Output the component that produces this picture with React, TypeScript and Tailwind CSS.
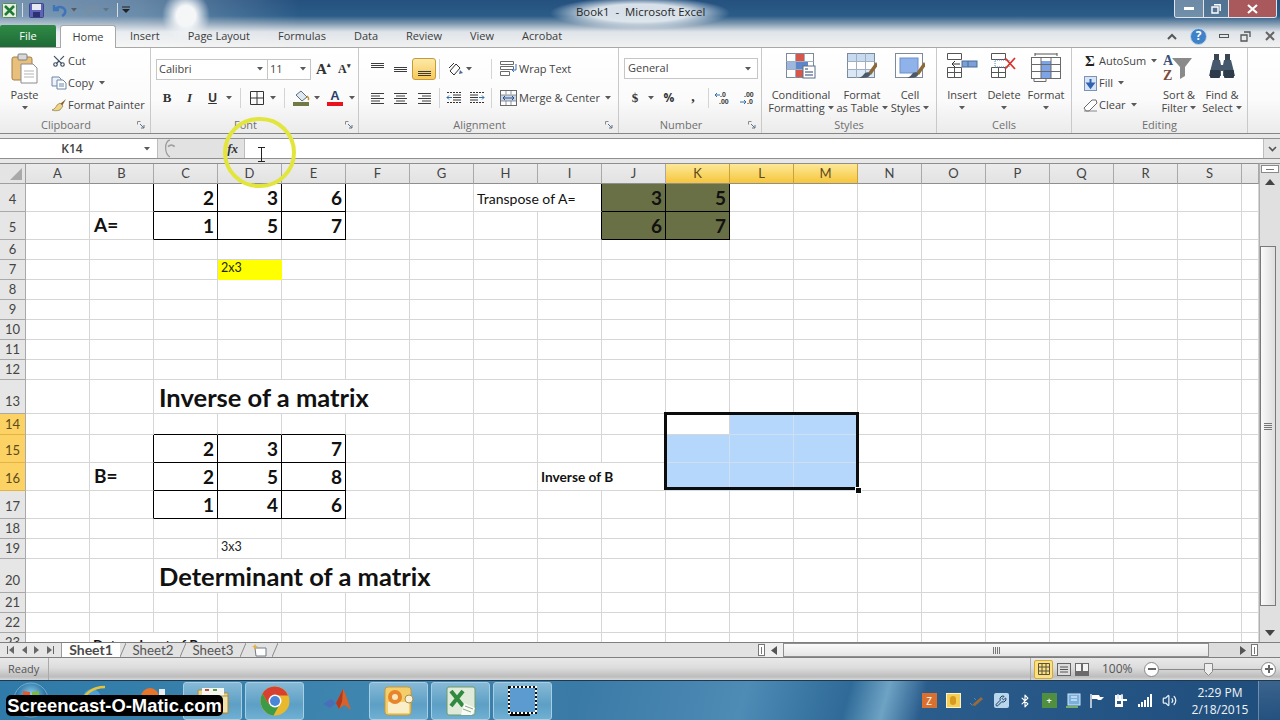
import React from "react";
import { Bluetooth, Scissors, Volume2, Wrench } from "lucide-react";

type CellData = { t?: string; cls?: string; span?: number };

const COLS = ["A", "B", "C", "D", "E", "F", "G", "H", "I", "J", "K", "L", "M", "N", "O", "P", "Q", "R", "S", ""];
const ROWS = [4, 5, 6, 7, 8, 9, 10, 11, 12, 13, 14, 15, 16, 17, 18, 19, 20, 21, 22, 23];

const num = "justify-end pr-[3px] text-[19px] font-bold leading-[20px] pb-[3px] text-[#111]";
const black = "border-[#000]";
// black edge of a table, drawn by the neighbouring cell
const edgeR = "border-r-[#000] border-b-[#d6d6d6]";
const edgeB = "border-b-[#000] border-r-[#d6d6d6]";
const olive = "bg-[#6a7046] border-[#000]";
const sel = "bg-[#b6d7fc] border-[#cfdff2]";
const title = "pl-[5px] text-[25.500px] font-bold leading-[30px] pb-[1px] text-[#111]";
const label = "pl-[4px] text-[19px] font-bold leading-[20px] pb-[4px] text-[#111]";

// only the cells that hold something or look different from a blank one
const sheet: Record<number, Record<string, CellData>> = {
  4: {
    B: { cls: edgeR },
    C: { t: "2", cls: `${num} ${black}` },
    D: { t: "3", cls: `${num} ${black}` },
    E: { t: "6", cls: `${num} ${black}` },
    H: { t: "Transpose of A=", span: 2, cls: `pl-[3px] text-[14px] pb-[2px] text-[#111] ${edgeR}` },
    J: { t: "3", cls: `${num} ${olive}` },
    K: { t: "5", cls: `${num} ${olive}` },
  },
  5: {
    B: { t: "A=", cls: `${label} ${edgeR}` },
    C: { t: "1", cls: `${num} ${black}` },
    D: { t: "5", cls: `${num} ${black}` },
    E: { t: "7", cls: `${num} ${black}` },
    I: { cls: edgeR },
    J: { t: "6", cls: `${num} ${olive}` },
    K: { t: "7", cls: `${num} ${olive}` },
  },
  7: { D: { t: "2x3", cls: "pl-[3px] text-[12.500px] pb-[1px] bg-[#ffff00] border-[#ffff00] text-[#222]" } },
  13: { C: { t: "Inverse of a matrix", span: 4, cls: title } },
  14: { C: { cls: edgeB }, D: { cls: edgeB }, E: { cls: edgeB }, L: { cls: sel }, M: { cls: sel } },
  15: {
    B: { cls: edgeR },
    C: { t: "2", cls: `${num} ${black}` },
    D: { t: "3", cls: `${num} ${black}` },
    E: { t: "7", cls: `${num} ${black}` },
    K: { cls: sel },
    L: { cls: sel },
    M: { cls: sel },
  },
  16: {
    B: { t: "B=", cls: `${label} ${edgeR}` },
    C: { t: "2", cls: `${num} ${black}` },
    D: { t: "5", cls: `${num} ${black}` },
    E: { t: "8", cls: `${num} ${black}` },
    I: { t: "Inverse of B", span: 2, cls: "pl-[3px] text-[13.700px] font-bold pb-[2px] text-[#111]" },
    K: { cls: sel },
    L: { cls: sel },
    M: { cls: sel },
  },
  17: {
    B: { cls: edgeR },
    C: { t: "1", cls: `${num} ${black}` },
    D: { t: "4", cls: `${num} ${black}` },
    E: { t: "6", cls: `${num} ${black}` },
  },
  19: { D: { t: "3x3", cls: "pl-[3px] text-[12.500px] pb-[1px] text-[#222]" } },
  20: { C: { t: "Determinant of a matrix", span: 5, cls: title } },
  23: { B: { t: "Determinant of B", span: 2, cls: "pl-[3px] text-[13.700px] font-bold items-start pt-[2px] text-[#111]" } },
};

const spanClass: Record<number, string> = { 2: "col-span-2", 4: "col-span-4", 5: "col-span-5" };
const tallRows = [4, 5, 13, 15, 16, 17, 20];

function Caret({ cls = "" }: { cls?: string }) {
  return (
    <svg width="6" height="4" viewBox="0 0 6 4" className={`inline-block shrink-0 ${cls}`}>
      <path d="M0 0h6L3 3.5z" fill="#5a5a5a" />
    </svg>
  );
}

function Launcher() {
  return (
    <svg width="8" height="8" viewBox="0 0 8 8">
      <path d="M.5 .5h3M.5 .5v3" stroke="#8a8a8a" fill="none" />
      <path d="M3 3l4 4M7 4v3H4" stroke="#5f7488" fill="none" />
    </svg>
  );
}

function Group({ w, label, launcher, children }: { w: string; label: string; launcher?: boolean; children: React.ReactNode }) {
  return (
    <div className={`${w} flex flex-col border-r border-[#c9c9c9] shrink-0`}>
      <div className="h-[70px] flex">{children}</div>
      <div className="h-[16px] flex items-center text-[11px] text-[#6f6f6f]">
        <div className="flex-1 text-center leading-[14px]">{label}</div>
        {launcher && (
          <div className="w-[18px] flex items-center justify-start pl-[5px]">
            <Launcher />
          </div>
        )}
      </div>
    </div>
  );
}

function BigBtn({ w, icon, l1, l2, caret = true }: { w: string; icon: React.ReactNode; l1: string; l2?: string; caret?: boolean }) {
  return (
    <div className={`${w} flex flex-col items-center pt-[5px] text-[11px] leading-[13px] text-[#444] shrink-0 whitespace-nowrap`}>
      <div className="h-[35px] flex items-start justify-center">{icon}</div>
      <div>{l1}</div>
      <div className="flex items-center gap-[3px] h-[13px]">
        {l2 && <span>{l2}</span>}
        {caret && <Caret />}
      </div>
    </div>
  );
}

function SmallBtn({ icon, text, caret, iconW = "w-[19px]" }: { icon: React.ReactNode; text: string; caret?: boolean; iconW?: string }) {
  return (
    <div className="h-[22px] flex items-center text-[11px] text-[#444] whitespace-nowrap">
      <div className={`${iconW} flex items-center justify-center shrink-0`}>{icon}</div>
      <span>{text}</span>
      {caret && <Caret cls="ml-[5px]" />}
    </div>
  );
}

function Slot({ w, children }: { w: string; children?: React.ReactNode }) {
  return <div className={`${w} h-[22px] flex items-center justify-center shrink-0`}>{children}</div>;
}

function VSep({ w }: { w: string }) {
  return (
    <Slot w={w}>
      <div className="w-px h-[20px] bg-[#d4d4d4]" />
    </Slot>
  );
}

function AlignIcon({ kind }: { kind: "top" | "mid" | "bot" | "l" | "c" | "r" }) {
  const c = "#3c3c3c";
  if (kind === "top" || kind === "mid" || kind === "bot") {
    const y = kind === "top" ? 1 : kind === "mid" ? 5 : 9;
    return (
      <svg width="15" height="15" viewBox="0 0 15 15">
        {[0, 2, 4].map((d) => (
          <path key={d} d={`M1 ${y + d + 0.5}h13`} stroke={c} />
        ))}
      </svg>
    );
  }
  const xs = kind === "l" ? [1, 1, 1, 1, 1] : kind === "c" ? [1, 3, 1, 3, 1] : [1, 5, 1, 5, 1];
  const ws = [13, 9, 13, 9, 13];
  return (
    <svg width="15" height="13" viewBox="0 0 15 13">
      {xs.map((x, i) => (
        <path key={i} d={`M${x} ${i * 2.5 + 1.5}h${ws[i]}`} stroke={c} />
      ))}
    </svg>
  );
}

function IndentIcon({ flip }: { flip?: boolean }) {
  return (
    <svg width="16" height="14" viewBox="0 0 16 14" className={flip ? "-scale-x-100" : ""}>
      {[1, 3.5, 6, 8.5, 11].map((y, i) => (
        <path key={y} d={`M${i % 4 === 0 ? 1 : 7} ${y + 0.5}h${i % 4 === 0 ? 14 : 8}`} stroke="#333" strokeDasharray={i === 0 || i === 4 ? "2 1" : undefined} />
      ))}
      <path d="M6 6.500H1M3 4.500L1 6.500l2 2" stroke="#2f6fb0" fill="none" />
    </svg>
  );
}

function Grid3({ children, w = 30, h = 26 }: { children?: React.ReactNode; w?: number; h?: number }) {
  return (
    <svg width={w} height={h} viewBox="0 0 30 26">
      <rect x=".5" y=".5" width="27" height="24" fill="#fff" stroke="#7c8a99" />
      <path d="M9.500 .5v24M18.500 .5v24M.5 8.500h27M.5 16.500h27" stroke="#9fb0c2" />
      {children}
    </svg>
  );
}

function Brush() {
  return (
    <g>
      <path d="M29 9l-8 11 3 2 7-10z" fill="#8a6a3a" />
      <path d="M18 20c3-2 6 0 5 2-1 3-7 3-11 3 3-1 4-3 6-5z" fill="#4c5a68" />
    </g>
  );
}

function Orb() {
  return (
    <svg width="36" height="36" viewBox="0 0 36 36">
      <defs>
        <radialGradient id="orb" cx=".5" cy=".35" r=".7">
          <stop offset="0" stopColor="#8fd0ef" />
          <stop offset=".6" stopColor="#2a75a6" />
          <stop offset="1" stopColor="#0d3f66" />
        </radialGradient>
      </defs>
      <circle cx="18" cy="18" r="17" fill="url(#orb)" stroke="#a9c6d8" strokeOpacity=".6" />
      <path d="M10 9l7 1v7l-7-1z" fill="#e8572c" />
      <path d="M19 10l7-1v7l-7 1z" fill="#7bbb3d" />
      <path d="M10 18l7 1v6l-7-1z" fill="#2f9ae0" />
      <path d="M19 19l7-1v6l-7 1z" fill="#f4c12f" />
    </svg>
  );
}

function Chrome() {
  return (
    <svg width="30" height="30" viewBox="0 0 30 30">
      <circle cx="15" cy="15" r="14.500" fill="#e8b92c" />
      <path d="M15 .5A14.500 14.500 0 0 0 2.400 7.800L8.500 18 15 9.500h13A14.500 14.500 0 0 0 15 .5z" fill="#d8402f" />
      <path d="M2.400 7.800A14.500 14.500 0 0 0 13.500 29.400L19 19.500 8.500 18z" fill="#3d9a45" />
      <circle cx="15" cy="15" r="6.500" fill="#fff" />
      <circle cx="15" cy="15" r="5" fill="#4a86d8" />
    </svg>
  );
}

function TaskBtn({ lit = true, children }: { lit?: boolean; children: React.ReactNode }) {
  return (
    <div
      className={`w-[59px] h-[38px] mt-[1px] flex items-center justify-center rounded-[3px] shrink-0 ${
        lit ? "border border-[#a7cfe3] bg-[linear-gradient(180deg,#86b9d6_0%,#5d9fc5_60%,#6fb0d3_100%)]" : ""
      }`}
    >
      {children}
    </div>
  );
}

function Tray({ children }: { children?: React.ReactNode }) {
  return <div className="w-[24px] h-[40px] flex items-center justify-center shrink-0">{children}</div>;
}

export default function App() {
  return (
    <div className="relative w-[1280px] h-[720px] overflow-hidden flex flex-col bg-white font-['Open_Sans','Noto_Sans',sans-serif]">
      {/* title bar + tabs */}
      <div className="h-[47px] shrink-0 flex flex-col bg-[radial-gradient(ellipse_24px_26px_at_186px_16px,#f4f6f8_40%,transparent_100%),radial-gradient(ellipse_90px_16px_at_640px_13px,rgba(235,240,244,.9)_55%,transparent_100%),linear-gradient(90deg,rgba(255,255,255,.38)_0px,rgba(255,255,255,.3)_140px,transparent_300px),linear-gradient(180deg,#25517f_0%,#2b5c88_34%,#7e98b0_50%,#dfe4e9_68%,#f1f1f1_100%)]">
        <div className="h-[25px] flex items-start">
          {/* quick access */}
          <div className="flex items-center h-[20px] pl-[2px]">
            <svg width="15" height="15" viewBox="0 0 15 15">
              <rect x=".5" y=".5" width="14" height="14" rx="1" fill="#e4efe0" stroke="#5d8a5a" />
              <path d="M3 3l9 9M12 3l-9 9" stroke="#1f7a35" strokeWidth="2.600" />
            </svg>
            <div className="w-px h-[14px] bg-[#d8dde2] ml-[5px] mr-[6px]" />
            <svg width="15" height="15" viewBox="0 0 15 15">
              <rect x=".5" y=".5" width="14" height="14" rx="1" fill="#5c63b8" stroke="#3d4488" />
              <rect x="3" y="1" width="9" height="6" fill="#e6e9f2" />
              <rect x="4" y="9" width="7" height="5" fill="#2c3270" />
            </svg>
            <svg width="15" height="14" viewBox="0 0 15 14" className="ml-[8px]">
              <path d="M2 2v5h5M2.500 7C5 3 11 3 13 7c1 3-1 5-3 6" stroke="#3f74b8" strokeWidth="2.400" fill="none" />
            </svg>
            <Caret cls="ml-[4px]" />
            <svg width="14" height="14" viewBox="0 0 15 14" className="ml-[8px] -scale-x-100 opacity-50">
              <path d="M2 2v5h5M2.500 7C5 3 11 3 13 7c1 3-1 5-3 6" stroke="#7f8c96" strokeWidth="2.400" fill="none" />
            </svg>
            <Caret cls="ml-[4px] opacity-50" />
            <div className="w-px h-[14px] bg-[#d8dde2] ml-[8px] mr-[4px]" />
            <svg width="8" height="8" viewBox="0 0 8 8">
              <path d="M0 1h8" stroke="#222" />
              <path d="M0 3h8L4 7z" fill="#222" />
            </svg>
          </div>
          <div className="ml-[446px] h-[24px] flex items-center text-[11.400px] text-[#262626] whitespace-nowrap">Book1&nbsp; -&nbsp; Microsoft Excel</div>
          {/* window buttons */}
          <div className="ml-auto mr-[3px] flex h-[18px] border border-t-0 border-[#dfe5ea] rounded-b-[3px] overflow-hidden">
            <div className="w-[29px] flex items-center justify-center bg-[#9fb0bf]/60 border-r border-[#dfe5ea]">
              <div className="w-[10px] h-[3px] bg-white" />
            </div>
            <div className="w-[25px] flex items-center justify-center bg-[#7d93a6]/50 border-r border-[#dfe5ea]">
              <svg width="10" height="10" viewBox="0 0 10 10">
                <path d="M3 .8h6.200V7M1 3h6v6H1z" stroke="#fff" strokeWidth="1.400" fill="none" />
              </svg>
            </div>
            <div className="w-[47px] flex items-center justify-center bg-[#a9585c] text-white">
              <svg width="11" height="10" viewBox="0 0 11 10">
                <path d="M1 1l9 8M10 1l-9 8" stroke="#fff" strokeWidth="2.200" />
              </svg>
            </div>
          </div>
        </div>
        <div className="h-[22px] flex items-end text-[11px] text-[#3c3c3c]">
          <div className="w-[56px] h-[22px] bg-[linear-gradient(180deg,#2f8a45,#1f6b37)] rounded-t-[2px] flex items-center justify-center text-white">File</div>
          <div className="w-[56px] h-[23px] -mb-px ml-[4px] z-10 bg-white border border-b-0 border-[#a8a8a8] rounded-t-[3px] flex items-center justify-center">Home</div>
          <div className="ml-[14px] flex gap-[28px] h-[22px] items-center whitespace-nowrap">
            <span>Insert</span>
            <span>Page Layout</span>
            <span>Formulas</span>
            <span>Data</span>
            <span>Review</span>
            <span>View</span>
            <span>Acrobat</span>
          </div>
          <div className="ml-auto h-[22px] flex items-center text-[#555]">
            <svg width="10" height="8" viewBox="0 0 10 8" className="mr-[13px]">
              <path d="M1 7l4-4 4 4" stroke="#555" strokeWidth="2" fill="none" />
            </svg>
            <div className="w-[17px] h-[17px] rounded-full bg-[#3f82c8] border border-[#bcd6ee] text-white text-[12px] font-bold flex items-center justify-center leading-none">?</div>
            <div className="w-[10px] h-[4px] border border-[#555] ml-[12px]" />
            <svg width="11" height="11" viewBox="0 0 11 11" className="ml-[11px]">
              <path d="M4 1h6v5M1 4h6v6H1z" stroke="#555" strokeWidth="1.300" fill="none" />
            </svg>
            <svg width="10" height="10" viewBox="0 0 10 10" className="ml-[14px] mr-[5px]">
              <path d="M1 1l8 8M9 1l-8 8" stroke="#666" strokeWidth="2" />
            </svg>
          </div>
        </div>
      </div>

      {/* ribbon */}
      <div className="h-[87px] shrink-0 flex border-t border-b border-t-[#a8a8a8] border-b-[#858585] bg-[linear-gradient(180deg,#ffffff_0%,#fbfbfb_60%,#ebebeb_100%)]">
        <Group w="w-[151px]" label="Clipboard" launcher>
          <BigBtn
            w="w-[49px]"
            l1="Paste"
            icon={
              <svg width="27" height="31" viewBox="0 0 27 31">
                <rect x="1" y="4" width="20" height="23" rx="2" fill="#e8bf7c" stroke="#a27f45" />
                <rect x="7" y="1" width="9" height="6" rx="1" fill="#d8d8d8" stroke="#7f7f7f" />
                <path d="M10 11h12l4 4v15H10z" fill="#fff" stroke="#8c8c8c" />
                <path d="M13 18h10M13 21h10M13 24h10" stroke="#b5b5b5" />
              </svg>
            }
          />
          <div className="pt-[2px] flex flex-col">
            <SmallBtn icon={<Scissors size={14} color="#3d4f66" className="-rotate-90" />} text="Cut" />
            <SmallBtn
              icon={
                <svg width="16" height="14" viewBox="0 0 16 14">
                  <path d="M1 1h7l2 2v7H1z" fill="#eef3fa" stroke="#6c86a6" />
                  <path d="M6 4h6l3 3v6H6z" fill="#fff" stroke="#6c86a6" />
                  <path d="M8 8h5M8 10h5" stroke="#6c86a6" />
                </svg>
              }
              text="Copy"
              caret
            />
            <SmallBtn
              icon={
                <svg width="16" height="14" viewBox="0 0 16 14">
                  <path d="M15 1L9 6l2 2z" fill="#8a5f2d" />
                  <path d="M9 5l3 3-3 4c-3 1-6 1-8 0 3-1 4-3 5-5z" fill="#efd58a" stroke="#8d7a40" strokeWidth=".7" />
                </svg>
              }
              text="Format Painter"
            />
          </div>
        </Group>

        <Group w="w-[208px]" label="Font" launcher>
          <div className="flex flex-col pt-[10px] gap-[7px] pl-[5px]">
            <div className="flex h-[22px] items-center">
              <div className="w-[112px] h-[21px] border border-[#c6c6c6] bg-white flex items-center justify-between pl-[2px] pr-[4px] text-[11px] text-[#444]">
                Calibri <Caret />
              </div>
              <div className="w-[43px] h-[21px] border border-l-0 border-[#c6c6c6] bg-white flex items-center justify-between pl-[2px] pr-[4px] text-[11px] text-[#444]">
                11 <Caret />
              </div>
              <div className="ml-[5px] w-[15px] flex items-start font-['Liberation_Serif',serif] font-bold text-[15px] leading-none text-[#333]">
                A<span className="text-[7px]">▴</span>
              </div>
              <div className="ml-[7px] w-[15px] flex items-start font-['Liberation_Serif',serif] font-bold text-[12px] leading-none text-[#333]">
                A<span className="text-[7px]">▾</span>
              </div>
            </div>
            <div className="flex h-[22px] items-center text-[#333]">
              <Slot w="w-[22px]">
                <span className="font-['Liberation_Serif',serif] font-bold text-[13px]">B</span>
              </Slot>
              <Slot w="w-[23px]">
                <span className="font-['Liberation_Serif',serif] italic font-bold text-[13px]">I</span>
              </Slot>
              <Slot w="w-[23px]">
                <span className="font-['Liberation_Sans',sans-serif] underline font-bold text-[12px]">U</span>
              </Slot>
              <Slot w="w-[10px]">
                <Caret />
              </Slot>
              <VSep w="w-[12px]" />
              <Slot w="w-[22px]">
                <svg width="14" height="14" viewBox="0 0 14 14">
                  <path d="M.5 .5h13v13H.5zM7 .5v13M.5 7h13" stroke="#333" fill="none" />
                </svg>
              </Slot>
              <Slot w="w-[10px]">
                <Caret />
              </Slot>
              <VSep w="w-[12px]" />
              <Slot w="w-[22px]">
                <svg width="17" height="16" viewBox="0 0 17 16">
                  <path d="M8 1l6 6-5 4-6-6z" fill="#dfe7ef" stroke="#5d6f82" />
                  <path d="M14 6c2 2 2 3 1 4" stroke="#c98f1f" strokeWidth="1.500" fill="none" />
                  <rect x="0" y="12" width="16" height="4" fill="#6f7a45" />
                </svg>
              </Slot>
              <Slot w="w-[10px]">
                <Caret />
              </Slot>
              <Slot w="w-[26px]">
                <div className="flex flex-col items-center leading-none">
                  <span className="font-['Liberation_Sans',sans-serif] font-bold text-[13px] text-[#2a3f6b] leading-[12px]">A</span>
                  <div className="w-[16px] h-[4px] bg-[#e8131c]" />
                </div>
              </Slot>
              <Slot w="w-[8px]">
                <Caret />
              </Slot>
            </div>
          </div>
        </Group>

        <Group w="w-[260px]" label="Alignment" launcher>
          <div className="flex flex-col pt-[10px] gap-[7px] pl-[7px]">
            <div className="flex h-[22px] items-center">
              <Slot w="w-[23px]"><AlignIcon kind="top" /></Slot>
              <Slot w="w-[23px]"><AlignIcon kind="mid" /></Slot>
              <div className="w-[24px] h-[22px] flex items-center justify-center rounded-[3px] border border-[#c49a3c] bg-[linear-gradient(180deg,#fde9a8,#f8c95a)] shrink-0">
                <AlignIcon kind="bot" />
              </div>
              <VSep w="w-[6px]" />
              <Slot w="w-[36px]">
                <svg width="16" height="14" viewBox="0 0 16 14">
                  <path d="M2 9l6-7 4 4-6 7zM1 6l5-5" stroke="#333" fill="none" />
                  <path d="M12 8l3 3-4 1z" fill="#4a6a9a" />
                </svg>
                <Caret cls="ml-[2px]" />
              </Slot>
              <Slot w="w-[10px]" />
              <VSep w="w-[6px]" />
              <SmallBtn
                iconW="w-[25px] pl-[4px]"
                icon={
                  <svg width="18" height="16" viewBox="0 0 18 16">
                    <path d="M.5 .5h13v3H.5zM.5 5.500h13v3H.5zM.5 10.500h9v4h-9z" fill="#fff" stroke="#6a6a6a" />
                    <path d="M16 3v6h-4M14 7l-2 2 2 2" stroke="#3f6db0" fill="none" />
                  </svg>
                }
                text="Wrap Text"
              />
            </div>
            <div className="flex h-[22px] items-center">
              <Slot w="w-[23px]"><AlignIcon kind="l" /></Slot>
              <Slot w="w-[23px]"><AlignIcon kind="c" /></Slot>
              <Slot w="w-[24px]"><AlignIcon kind="r" /></Slot>
              <VSep w="w-[6px]" />
              <Slot w="w-[23px]"><IndentIcon /></Slot>
              <Slot w="w-[23px]"><IndentIcon flip /></Slot>
              <VSep w="w-[6px]" />
              <SmallBtn
                iconW="w-[25px] pl-[4px]"
                icon={
                  <svg width="18" height="16" viewBox="0 0 18 16">
                    <rect x=".5" y=".5" width="16" height="15" fill="#fff" stroke="#6a6a6a" />
                    <rect x="1" y="5" width="15" height="6" fill="#c7d6ea" />
                    <path d="M3 8h11M5 6l-2 2 2 2M12 6l2 2-2 2" stroke="#2c4f85" fill="none" />
                    <path d="M.5 5h16M.5 11h16M6 .5v4M11 .5v4M6 11v4M11 11v4" stroke="#6a6a6a" strokeWidth=".7" />
                  </svg>
                }
                text="Merge & Center"
                caret
              />
            </div>
          </div>
        </Group>

        <Group w="w-[143px]" label="Number" launcher>
          <div className="flex flex-col pt-[10px] gap-[7px] pl-[5px]">
            <div className="w-[134px] h-[21px] mb-[1px] border border-[#c6c6c6] bg-white flex items-center justify-between pl-[3px] pr-[6px] text-[11px] text-[#444]">
              General <Caret />
            </div>
            <div className="flex h-[22px] items-center text-[#333]">
              <Slot w="w-[22px]"><span className="font-bold text-[13px] font-['Liberation_Serif',serif]">$</span></Slot>
              <Slot w="w-[10px]"><Caret /></Slot>
              <Slot w="w-[2px]" />
              <Slot w="w-[22px]"><span className="font-bold text-[12px]">%</span></Slot>
              <Slot w="w-[2px]" />
              <Slot w="w-[22px]"><span className="font-bold text-[14px] font-['Liberation_Serif',serif] -mt-[4px]">,</span></Slot>
              <VSep w="w-[8px]" />
              <Slot w="w-[24px]">
                <svg width="18" height="14" viewBox="0 0 18 14">
                  <text x="5" y="6" fontSize="7" fontWeight="700" fill="#333" fontFamily="Liberation Sans">.0</text>
                  <text x="4" y="13" fontSize="7" fontWeight="700" fill="#333" fontFamily="Liberation Sans">.00</text>
                  <path d="M5 4H0M2 2L0 4l2 2" stroke="#2f6fb0" fill="none" />
                </svg>
              </Slot>
              <Slot w="w-[24px]">
                <svg width="18" height="14" viewBox="0 0 18 14">
                  <text x="5" y="6" fontSize="7" fontWeight="700" fill="#333" fontFamily="Liberation Sans">.00</text>
                  <text x="8" y="13" fontSize="7" fontWeight="700" fill="#333" fontFamily="Liberation Sans">.0</text>
                  <path d="M1 11h6M5 9l2 2-2 2" stroke="#2f6fb0" fill="none" />
                </svg>
              </Slot>
            </div>
          </div>
        </Group>

        <Group w="w-[175px]" label="Styles">
          <div className="w-[7px]" />
          <BigBtn
            w="w-[64px]"
            l1="Conditional"
            l2="Formatting"
            icon={
              <Grid3>
                <rect x="10" y="1" width="8" height="7" fill="#d8564a" />
                <rect x="1" y="9" width="8" height="7" fill="#9db7e0" />
                <rect x="10" y="9" width="12" height="7" fill="#5f86c9" />
                <rect x="10" y="17" width="8" height="7" fill="#d8564a" />
                <rect x="17" y="13" width="12" height="12" fill="#fff" stroke="#5a6f85" />
                <path d="M19 16h3M19 19h8M19 22h8" stroke="#2a3f6b" />
              </Grid3>
            }
          />
          <BigBtn
            w="w-[58px]"
            l1="Format"
            l2="as Table"
            icon={
              <Grid3>
                <rect x="1" y="1" width="26" height="7" fill="#c7daf0" />
                <rect x="1" y="17" width="26" height="7" fill="#dbe7f5" />
                <path d="M9.500 .5v24M18.500 .5v24" stroke="#9fb0c2" />
                <Brush />
              </Grid3>
            }
          />
          <BigBtn
            w="w-[38px]"
            l1="Cell"
            l2="Styles"
            icon={
              <svg width="30" height="26" viewBox="0 0 30 26">
                <rect x=".5" y=".5" width="27" height="24" fill="#fff" stroke="#7c8a99" />
                <rect x="5" y="5" width="18" height="15" fill="#8fb2ea" stroke="#6c8fc9" />
                <Brush />
              </svg>
            }
          />
        </Group>

        <Group w="w-[135px]" label="Cells">
          <div className="w-[4px]" />
          <BigBtn
            w="w-[42px]"
            l1="Insert"
            icon={
              <svg width="32" height="26" viewBox="0 0 32 26">
                <path d="M1.500 .5h14v6h-14zM1.500 14.500h14v10h-14zM8.500 14.500v10M1.500 19.500h14" fill="#fff" stroke="#555" />
                <rect x="16" y="8" width="15" height="6" fill="#7ba0d8" stroke="#4a6a9a" />
                <path d="M22 8v6" stroke="#4a6a9a" />
                <path d="M14 11H6M9 8l-3 3 3 3" stroke="#333" fill="none" />
              </svg>
            }
          />
          <BigBtn
            w="w-[42px]"
            l1="Delete"
            icon={
              <svg width="28" height="26" viewBox="0 0 28 26">
                <path d="M1.500 .5h14v6h-14zM1.500 14.500h14v10h-14zM8.500 14.500v10M1.500 19.500h14" fill="#fff" stroke="#555" />
                <rect x="5" y="7" width="14" height="7" fill="#fff" stroke="#5a7fb8" strokeDasharray="1 1" />
                <path d="M15 5l10 11M25 5L15 16" stroke="#d8342a" strokeWidth="1.800" />
              </svg>
            }
          />
          <BigBtn
            w="w-[42px]"
            l1="Format"
            icon={
              <svg width="30" height="30" viewBox="0 0 30 30">
                <path d="M4 1h22M4 0v3M26 0v3" stroke="#555" />
                <rect x=".5" y="4.500" width="29" height="21" fill="#fff" stroke="#6a6a6a" />
                <rect x="10" y="8" width="10" height="17" fill="#7ea4e8" />
                <path d="M10 4.500v21M20 4.500v21M.5 11.500h29M.5 18.500h29" stroke="#6a6a6a" />
                <path d="M3 25.500v3h12v-3" stroke="#6a6a6a" fill="none" />
              </svg>
            }
          />
        </Group>

        <Group w="w-[176px]" label="Editing">
          <div className="w-[9px]" />
          <div className="w-[76px] pt-[2px] flex flex-col">
            <SmallBtn iconW="w-[18px]" icon={<span className="font-['Liberation_Serif',serif] font-bold text-[15px] text-[#222] leading-none">Σ</span>} text="AutoSum" caret />
            <SmallBtn
              iconW="w-[18px]"
              icon={
                <svg width="13" height="15" viewBox="0 0 13 15">
                  <rect x=".5" y=".5" width="12" height="14" fill="#d6e4f6" stroke="#7c93b3" />
                  <path d="M6.500 3v7M3.500 7.500l3 4 3-4z" stroke="#2f62b0" fill="#2f62b0" strokeWidth="2" />
                </svg>
              }
              text="Fill"
              caret
            />
            <SmallBtn
              iconW="w-[18px]"
              icon={
                <svg width="15" height="13" viewBox="0 0 15 13">
                  <path d="M1 9l8-8h4l1 3-8 8H3z" fill="#fff" stroke="#6a6a6a" />
                  <path d="M1 12h13" stroke="#888" />
                </svg>
              }
              text="Clear"
              caret
            />
          </div>
          <BigBtn
            w="w-[44px]"
            l1="Sort &"
            l2="Filter"
            icon={
              <div className="w-[32px] h-[30px] flex">
                <div className="flex flex-col font-['Liberation_Serif',serif] font-bold text-[14px] leading-[15px] text-[#38507a]">
                  <span>A</span>
                  <span className="text-[#7a4a3a]">Z</span>
                </div>
                <svg width="20" height="26" viewBox="0 0 20 26" className="mt-[4px] -ml-[1px]">
                  <path d="M0 1h20l-7 9v9l-5 3V10z" fill="#8a8a8a" />
                </svg>
              </div>
            }
          />
          <BigBtn
            w="w-[42px]"
            l1="Find &"
            l2="Select"
            icon={
              <svg width="28" height="27" viewBox="0 0 28 27">
                <rect x="6" y="1" width="5" height="6" fill="#3a4654" />
                <rect x="17" y="1" width="5" height="6" fill="#3a4654" />
                <path d="M5 7h7l1 5h2l1-5h7l4 16H15v-5h-2v5H1z" fill="#46586c" />
                <rect x="2" y="17" width="10" height="8" rx="1" fill="#2e3b4a" />
                <rect x="16" y="17" width="10" height="8" rx="1" fill="#2e3b4a" />
              </svg>
            }
          />
        </Group>
      </div>

      {/* formula bar */}
      <div className="h-[29px] shrink-0 bg-[#e8e8e8] pt-[4px] flex flex-col">
        <div className="h-[21px] flex items-stretch border-t border-b border-[#8f8f8f] bg-[#e2e2e2]">
          <div className="w-[157px] bg-white flex items-center text-[12px] text-[#333]">
            <span className="w-[144px] text-center font-semibold text-[#444]">K14</span>
            <Caret />
          </div>
          <div className="w-[88px] flex items-center border-l border-r border-[#bdbdbd]">
            <svg width="16" height="19" viewBox="0 0 16 20" className="ml-[2px]">
              <path d="M10 1C4 3 4 15 10 19" stroke="#9a9a9a" strokeWidth="1.300" fill="none" />
              <path d="M8 8c2-2 5-2 7 0" stroke="#a0a0a0" strokeWidth="2" fill="none" />
            </svg>
            <span className="ml-auto mr-[6px] font-['Liberation_Serif',serif] italic font-bold text-[13px] text-[#333]">fx</span>
          </div>
          <div className="flex-1 bg-white" />
          <div className="w-[17px] flex items-center justify-center border-l border-[#bdbdbd] bg-[#e4e4e4]">
            <svg width="9" height="6" viewBox="0 0 9 6">
              <path d="M1 1l3.500 3.500L8 1" stroke="#555" strokeWidth="1.600" fill="none" />
            </svg>
          </div>
        </div>
      </div>

      {/* sheet + vertical scrollbar */}
      <div className="h-[479px] shrink-0 flex relative">
        <div className="relative w-[1259px] h-[479px] overflow-hidden grid grid-cols-[26px_repeat(19,64px)_17px] grid-rows-[20px_28px_28px_repeat(7,20px)_34px_21px_repeat(3,28px)_20px_20px_34px_20px_20px_20px] font-['Lato',sans-serif] border-t border-[#8f8f8f]">
          <div className="bg-[#e4e4e4] border-r border-b border-[#9f9f9f] flex items-end justify-end pr-[3px] pb-[3px]">
            <svg width="12" height="12" viewBox="0 0 12 12">
              <path d="M12 0v12H0z" fill="#a9a9a9" />
            </svg>
          </div>
          {COLS.map((c, i) => (
            <div
              key={i}
              className={`flex items-center justify-center text-[13px] border-r border-b ${
                c === "K" || c === "L" || c === "M"
                  ? "bg-[linear-gradient(180deg,#fde898,#f6c63c)] border-r-[#c9a23e] border-b-[#8f8f8f] text-[#5b4a1c]"
                  : "bg-[linear-gradient(180deg,#ececec,#e2e2e2)] border-r-[#a9a9a9] border-b-[#8f8f8f] text-[#444]"
              }`}
            >
              {c}
            </div>
          ))}
          {ROWS.flatMap((r) => {
            const data = sheet[r] ?? {};
            const hot = r === 14 || r === 15 || r === 16;
            const out = [
              <div
                key={`h${r}`}
                className={`flex items-end justify-center text-[13px] leading-[16px] border-r border-b border-r-[#a9a9a9] ${tallRows.includes(r) ? "pb-[4px]" : "pb-[2px]"} ${
                  hot ? "bg-[#fbd263] border-b-[#e3b344] text-[#5b4a1c]" : "bg-[#e6e6e6] border-b-[#a9a9a9] text-[#444]"
                }`}
              >
                {r}
              </div>,
            ];
            let skip = 0;
            COLS.forEach((c) => {
              if (skip > 0) {
                skip -= 1;
                return;
              }
              const cell = data[c] ?? {};
              if (cell.span) skip = cell.span - 1;
              const grid = cell.cls?.includes("border-") ? "" : "border-[#d6d6d6]";
              out.push(
                <div
                  key={`${c}${r}`}
                  className={`flex items-end whitespace-nowrap min-w-0 border-r border-b ${grid} ${cell.span ? spanClass[cell.span] : ""} ${cell.cls ?? ""}`}
                >
                  {cell.t}
                </div>
              );
            });
            return out;
          })}
          {/* K14:M16 selection */}
          <div className="absolute left-[664px] top-[248px] w-[195px] h-[78px] border-[3px] border-[#0c0c0c]" />
          <div className="absolute left-[855px] top-[323px] w-[5px] h-[5px] bg-[#0c0c0c] border border-white box-content" />
        </div>
        <div className="w-[21px] flex flex-col items-stretch bg-[#e0e0e0] border-t border-[#8f8f8f] border-l border-l-[#b0b0b0]">
          <div className="h-[8px] mx-[1px] mt-[1px] mb-[2px] border border-[#8a8a8a] bg-white flex items-center justify-center">
            <div className="w-[8px] h-px bg-[#777]" />
          </div>
          <div className="h-[14px] flex items-center justify-center">
            <svg width="10" height="6" viewBox="0 0 10 6">
              <path d="M5 0l5 6H0z" fill="#444" />
            </svg>
          </div>
          <div className="h-[57px]" />
          <div className="h-[360px] w-[16px] border border-[#7a7a7a] bg-[linear-gradient(90deg,#fafafa,#dedede)] flex flex-col items-center justify-center gap-[1px]">
            <div className="w-[8px] h-px bg-[#777]" />
            <div className="w-[8px] h-px bg-[#777]" />
            <div className="w-[8px] h-px bg-[#777]" />
            <div className="w-[8px] h-px bg-[#777]" />
          </div>
          <div className="flex-1 flex items-end justify-center pb-[6px]">
            <svg width="10" height="6" viewBox="0 0 10 6">
              <path d="M5 6l5-6H0z" fill="#444" />
            </svg>
          </div>
        </div>
      </div>

      {/* sheet tabs + horizontal scrollbar */}
      <div className="h-[16px] shrink-0 flex items-stretch border-t border-b border-[#7f7f7f] bg-[#e2e2e2] text-[13.300px] leading-[14px] text-[#555] font-['Lato',sans-serif]">
        <div className="w-[62px] flex items-center justify-around px-[3px] bg-[#e6e6e6] border-r border-[#9a9a9a] text-[#555]">
          <svg width="7" height="8" viewBox="0 0 7 8"><path d="M.5 0v8" stroke="#666" /><path d="M7 0v8L2 4z" fill="#666" /></svg>
          <svg width="5" height="8" viewBox="0 0 5 8"><path d="M5 0v8L0 4z" fill="#666" /></svg>
          <svg width="5" height="8" viewBox="0 0 5 8"><path d="M0 0v8l5-4z" fill="#666" /></svg>
          <svg width="7" height="8" viewBox="0 0 7 8"><path d="M6.500 0v8" stroke="#666" /><path d="M0 0v8l5-4z" fill="#666" /></svg>
        </div>
        <div className="w-[58px] bg-white flex items-center justify-center font-bold text-[14px] text-[#4a4a4a]">Sheet1</div>
        <svg width="6" height="14" viewBox="0 0 6 14" className="shrink-0"><path d="M0 14L6 0" stroke="#8a8a8a" /></svg>
        <div className="w-[54px] flex items-center justify-center">Sheet2</div>
        <svg width="6" height="14" viewBox="0 0 6 14" className="shrink-0"><path d="M0 14L6 0" stroke="#8a8a8a" /></svg>
        <div className="w-[54px] flex items-center justify-center">Sheet3</div>
        <svg width="6" height="14" viewBox="0 0 6 14" className="shrink-0"><path d="M0 14L6 0" stroke="#8a8a8a" /></svg>
        <div className="w-[26px] flex items-center justify-center">
          <svg width="16" height="13" viewBox="0 0 16 13">
            <path d="M4 4h11v8H5z" fill="#fff" stroke="#6f7d8c" />
            <path d="M4 0l1 2 2 .5-2 1L4 6 3 3.500l-2-1 2-.5z" fill="#e2b23a" />
          </svg>
        </div>
        <svg width="6" height="14" viewBox="0 0 6 14" className="shrink-0"><path d="M0 14L6 0" stroke="#8a8a8a" /></svg>
        <div className="w-[480px]" />
        <div className="w-[7px] my-[1px] border border-[#777] bg-white flex items-center justify-center">
          <div className="w-px h-[7px] bg-[#777]" />
        </div>
        <div className="w-[18px] flex items-center justify-center bg-[#efefef]">
          <svg width="6" height="9" viewBox="0 0 6 9"><path d="M6 0v9L0 4.500z" fill="#555" /></svg>
        </div>
        <div className="w-[426px] border border-[#8f8f8f] bg-[linear-gradient(180deg,#fafafa,#e6e6e6)] flex items-center justify-center gap-[1px]">
          <div className="w-px h-[7px] bg-[#777]" />
          <div className="w-px h-[7px] bg-[#777]" />
          <div className="w-px h-[7px] bg-[#777]" />
          <div className="w-px h-[7px] bg-[#777]" />
        </div>
        <div className="w-[42px] flex items-center justify-end pr-[5px] bg-[#dcdcdc]">
          <svg width="6" height="9" viewBox="0 0 6 9"><path d="M0 0v9l6-4.500z" fill="#555" /></svg>
        </div>
        <div className="w-[7px] my-[1px] border border-[#777] bg-white flex items-center justify-center">
          <div className="w-px h-[7px] bg-[#777]" />
        </div>
      </div>

      {/* status bar */}
      <div className="h-[22px] shrink-0 flex items-center bg-[linear-gradient(180deg,#e9e9e9_0%,#dcdcdc_45%,#bdbdbd_85%,#d8d8d8_100%)] text-[11px] text-[#555]">
        <div className="w-[49px] h-full flex items-center pl-[8px] border-r border-[#aaa]">Ready</div>
        <div className="ml-auto h-full flex items-center border-l border-[#aaa] pl-[3px]">
          <div className="w-[19px] h-[19px] flex items-center justify-center rounded-[2px] border border-[#d3a93a] bg-[#fbe07f]">
            <svg width="12" height="12" viewBox="0 0 12 12">
              <path d="M.5 .5h11v11H.5zM4 .5v11M8 .5v11M.5 4h11M.5 8h11" stroke="#5a5240" fill="none" />
            </svg>
          </div>
          <div className="w-[18px] flex items-center justify-center ml-[2px]">
            <svg width="14" height="13" viewBox="0 0 14 13">
              <rect x=".5" y=".5" width="13" height="12" fill="#dcdcdc" stroke="#666" />
              <path d="M3 4h8M3 6.500h8M3 9h8" stroke="#555" />
            </svg>
          </div>
          <div className="w-[18px] flex items-center justify-center">
            <svg width="14" height="13" viewBox="0 0 14 13">
              <rect width="14" height="13" fill="#6a6a6a" />
              <rect x="1" y="1" width="5" height="7" fill="#f4f4f4" />
              <rect x="8" y="1" width="5" height="7" fill="#f4f4f4" />
            </svg>
          </div>
          <span className="ml-[11px] text-[12px] w-[36px]">100%</span>
          <div className="w-[15px] h-[15px] ml-[6px] rounded-full border border-[#888] bg-white flex items-center justify-center">
            <div className="w-[8px] h-[2px] bg-[#666]" />
          </div>
          <div className="relative w-[102px] h-px bg-[#8a8a8a] flex justify-center">
            <svg width="9" height="13" viewBox="0 0 9 13" className="absolute -top-[6px] left-[45px]">
              <path d="M.5 .5h8v8L4.500 12.500.5 8.500z" fill="#eee" stroke="#888" />
            </svg>
          </div>
          <div className="w-[15px] h-[15px] mr-[4px] rounded-full border border-[#888] bg-white flex items-center justify-center relative">
            <div className="w-[8px] h-[2px] bg-[#666]" />
            <div className="absolute w-[2px] h-[8px] bg-[#666]" />
          </div>
        </div>
      </div>

      {/* taskbar */}
      <div className="h-[40px] shrink-0 flex border-t border-[#20384f] bg-[linear-gradient(105deg,#2f7aa8_0%,#3f86b0_30%,#3a7aa6_45%,#4e8bb5_58%,#2f6a98_66%,#6ea3c4_69%,#2a5c8c_72%,#1f4d7c_100%)] text-white">
        <div className="w-[62px] flex items-center justify-center pb-[2px]"><Orb /></div>
        <div className="w-[60px] flex items-center justify-center pb-[6px]">
          <svg width="28" height="26" viewBox="0 0 28 26">
            <ellipse cx="14" cy="13" rx="9" ry="9" fill="#4aa0dc" />
            <path d="M1 22C6 8 16 2 27 2" stroke="#e4c33a" strokeWidth="2.400" fill="none" />
            <rect x="8" y="11" width="12" height="3" fill="#fff" />
          </svg>
        </div>
        <div className="w-[61px] flex items-center justify-center pb-[6px]">
          <svg width="28" height="22" viewBox="0 0 28 22">
            <circle cx="11" cy="10" r="9" fill="#e8742a" />
            <rect x="20" y="2" width="6" height="14" fill="#e6edf3" />
          </svg>
        </div>
        <div className="flex gap-[3px]">
          <TaskBtn>
            <svg width="32" height="28" viewBox="0 0 32 28">
              <path d="M1 3h11l2 3h17v20H1z" fill="#e9d18c" stroke="#a78f4a" />
              <rect x="5" y="1" width="22" height="8" fill="#f6f6f0" />
              <rect x="8" y="2" width="4" height="2" fill="#b84f3a" />
              <rect x="16" y="2" width="4" height="2" fill="#5a9a4f" />
              <path d="M1 9h30v17H1z" fill="#f2e2ac" stroke="#a78f4a" />
            </svg>
          </TaskBtn>
          <TaskBtn><Chrome /></TaskBtn>
          <TaskBtn lit={false}>
            <svg width="30" height="28" viewBox="0 0 30 28">
              <path d="M1 17l8-5 5 4-6 5z" fill="#4a6fb8" />
              <path d="M14 16L21 2c3 5 5 13 8 21-3-2-5-5-7-5l-5 4z" fill="#d8622a" />
              <path d="M14 16L21 2l-1 13-3 7z" fill="#b03a1f" />
            </svg>
          </TaskBtn>
          <TaskBtn>
            <svg width="30" height="30" viewBox="0 0 30 30">
              <rect x="1" y="1" width="26" height="28" rx="3" fill="#f4ce6a" stroke="#c49a3c" />
              <rect x="4" y="16" width="21" height="11" fill="#faeec8" />
              <circle cx="11" cy="11" r="7" fill="#e8842a" />
              <circle cx="11" cy="11" r="3" fill="#f9e7c0" />
              <circle cx="25" cy="13" r="4" fill="#f8f0d8" stroke="#a78f4a" />
            </svg>
          </TaskBtn>
          <TaskBtn>
            <svg width="30" height="30" viewBox="0 0 30 30">
              <rect x="1" y="1" width="28" height="28" rx="2" fill="#dfead8" stroke="#6f9a6a" />
              <path d="M5 5l12 15M17 5L5 20" stroke="#2f8a3f" strokeWidth="4" />
              <path d="M18 17l11 5-3 7H15z" fill="#fbfbf6" />
              <path d="M19 20l8 3M17 23l8 3" stroke="#8aa58a" />
            </svg>
          </TaskBtn>
          <TaskBtn>
            <svg width="32" height="32" viewBox="0 0 32 32">
              <rect x="3" y="26" width="20" height="5" fill="#000" />
              <rect x="2" y="2" width="27" height="26" fill="#5b9bcf" stroke="#fff" strokeWidth="2" />
              <rect x="2" y="2" width="27" height="26" fill="none" stroke="#111" strokeWidth="2" strokeDasharray="2 2" />
            </svg>
          </TaskBtn>
        </div>
        <div className="ml-auto flex items-center">
          <Tray>
            <div className="w-[15px] h-[15px] bg-[#d9702f] flex items-center justify-center text-[10px] leading-none">Z</div>
          </Tray>
          <Tray>
            <div className="w-[15px] h-[15px] bg-[#f3cf58] border border-white/70 flex items-center justify-center">
              <div className="w-[6px] h-[9px] rounded-full bg-[#d89a1f]" />
            </div>
          </Tray>
          <Tray>
            <svg width="16" height="14" viewBox="0 0 16 14">
              <path d="M3 11l9-8 2 2-8 7z" fill="#9b6a3a" />
              <path d="M1 9l3 3M5 4l2 2" stroke="#5aa5d8" strokeDasharray="1 1" />
            </svg>
          </Tray>
          <Tray>
            <div className="w-[15px] h-[15px] bg-[#b9d6ec] rounded-[2px] flex items-center justify-center">
              <Wrench size={12} color="#1d3f66" />
            </div>
          </Tray>
          <Tray><Bluetooth size={14} color="#fff" /></Tray>
          <Tray>
            <div className="w-[15px] h-[15px] bg-[#4f8f3f] flex items-center justify-center text-[9px] font-bold leading-none">+</div>
          </Tray>
          <Tray>
            <svg width="16" height="16" viewBox="0 0 16 16">
              <rect x="3" y="1" width="12" height="11" fill="#7ab0dc" stroke="#d5e7f5" />
              <path d="M6 4h6M6 7h6" stroke="#fff" />
              <path d="M1 14h12" stroke="#6fb06a" strokeWidth="2" />
            </svg>
          </Tray>
          <Tray>
            <svg width="14" height="14" viewBox="0 0 14 14">
              <path d="M1 0v14" stroke="#fff" strokeWidth="1.300" />
              <path d="M2 1h7l1 2h4l-3 3H8L7 5H2z" fill="#fff" />
            </svg>
          </Tray>
          <Tray>
            <svg width="14" height="15" viewBox="0 0 14 15">
              <rect x="1" y="2" width="8" height="12" fill="#fff" />
              <path d="M4 1v5M8 1v5" stroke="#cfe0ee" strokeWidth="1.500" />
              <path d="M9 7h4" stroke="#fff" strokeWidth="2" />
              <rect x="3" y="8" width="4" height="3" fill="#31587f" />
            </svg>
          </Tray>
          <Tray>
            <svg width="15" height="13" viewBox="0 0 15 13">
              <rect x="0" y="10" width="2" height="3" fill="#fff" />
              <rect x="3" y="8" width="2" height="5" fill="#fff" />
              <rect x="6" y="6" width="2" height="7" fill="#fff" />
              <rect x="9" y="3" width="2" height="10" fill="#fff" />
              <rect x="12" y="0" width="2" height="13" fill="#fff" />
            </svg>
          </Tray>
          <Tray><Volume2 size={15} color="#e8eef4" /></Tray>
          <div className="w-[76px] ml-[1px] flex flex-col items-center justify-center text-[12px] leading-[17px] text-[#f0f4f8]">
            <span>2:29 PM</span>
            <span>2/18/2015</span>
          </div>
          <div className="w-[22px] h-[39px] border-l border-white/30 bg-[linear-gradient(180deg,rgba(255,255,255,.12),rgba(255,255,255,.02))]" />
        </div>
      </div>

      {/* overlays from the screen recorder */}
      <div className="absolute left-[223px] top-[117px] w-[73px] h-[71px] rounded-full border-[4px] border-[#e2e53c] blur-[0.4px]" />
      <svg width="7" height="15" viewBox="0 0 7 15" className="absolute left-[258px] top-[147px]">
        <path d="M0 .5h7M0 14.500h7M3.500 .5v14" stroke="#222" />
      </svg>
      <div className="absolute left-[6px] top-[695px] w-[217px] h-[21px] rounded-[5px] bg-black flex items-center justify-center text-white font-bold text-[18.400px] font-['Liberation_Sans',sans-serif] whitespace-nowrap">
        Screencast-O-Matic.com
      </div>
    </div>
  );
}
